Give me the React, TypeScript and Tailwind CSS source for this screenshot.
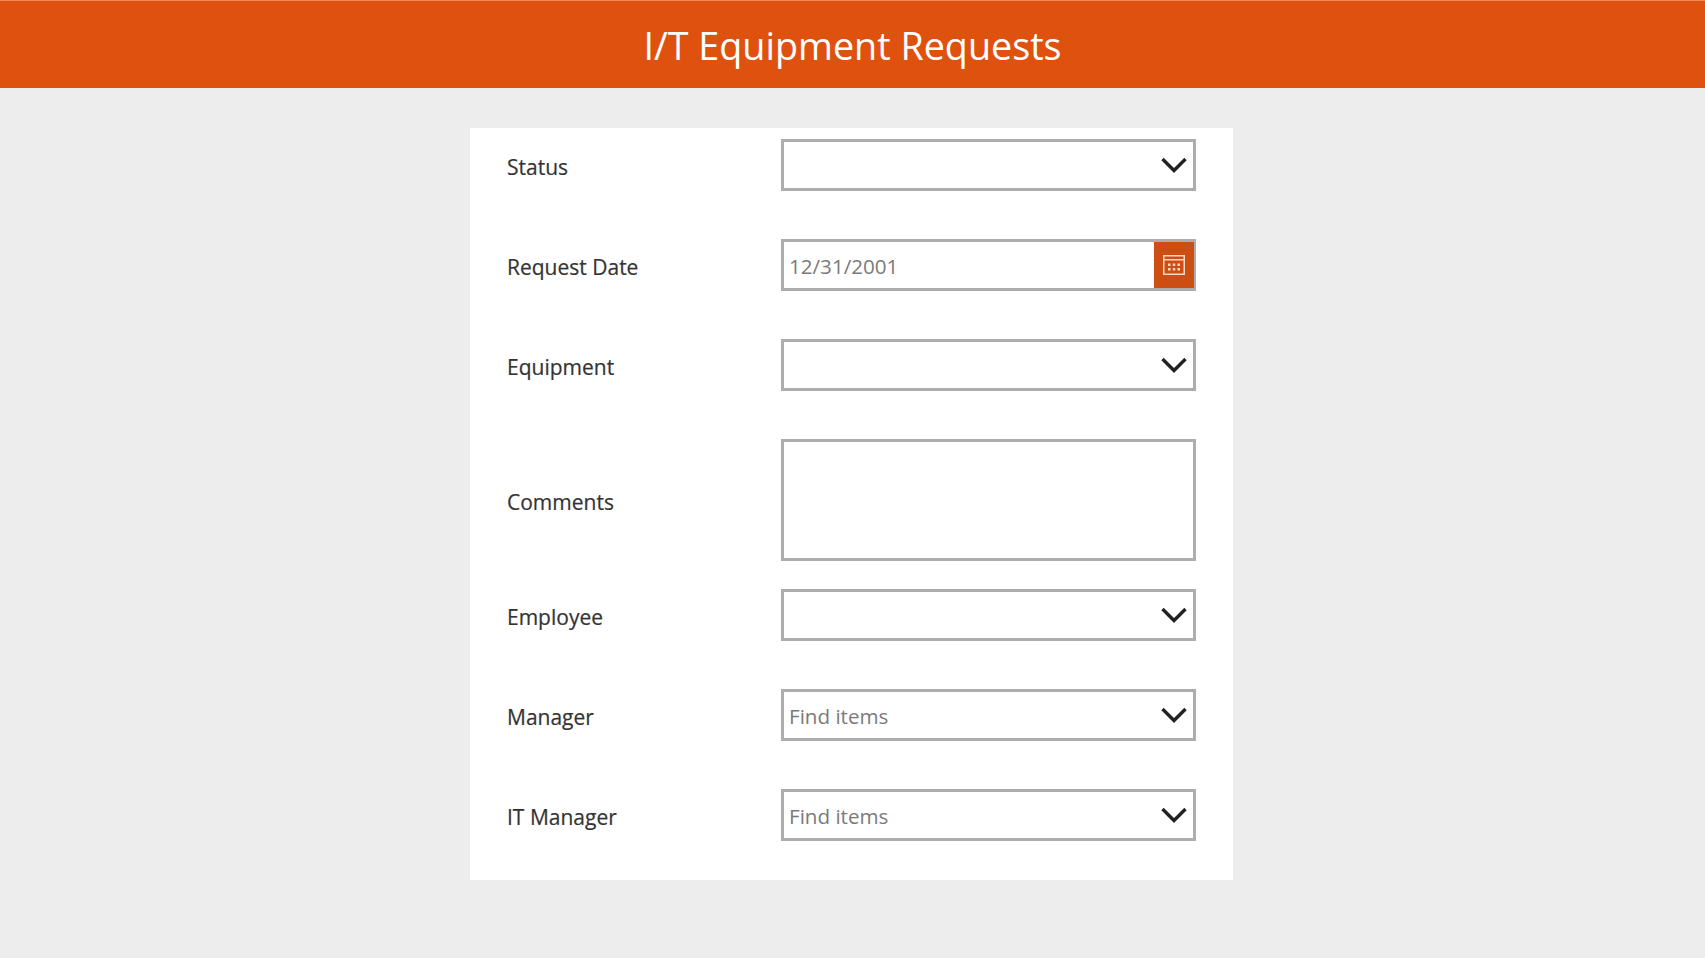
import React from "react";

function Chevron() {
  return (
    <svg width="26" height="16" viewBox="0 0 26 16" fill="none" className="shrink-0">
      <path d="M1.5 2 L13 13.5 L24.5 2" stroke="#222222" strokeWidth="3.4" />
    </svg>
  );
}

function CalendarIcon() {
  return (
    <svg width="22" height="20" viewBox="0 0 22 20" fill="none">
      <rect x="0.75" y="0.75" width="20.5" height="18.5" stroke="#fbd9c0" strokeWidth="1.5" />
      <rect x="1" y="4" width="20" height="1.5" fill="#fbd9c0" />
      <g fill="#fbd9c0">
        <rect x="5" y="8.5" width="2.5" height="2.5" />
        <rect x="9.75" y="8.5" width="2.5" height="2.5" />
        <rect x="14.5" y="8.5" width="2.5" height="2.5" />
        <rect x="5" y="13" width="2.5" height="2.5" />
        <rect x="9.75" y="13" width="2.5" height="2.5" />
        <rect x="14.5" y="13" width="2.5" height="2.5" />
      </g>
    </svg>
  );
}

function Label({ children }: { children: React.ReactNode }) {
  return (
    <div className="w-[311px] pl-[37px] pt-[4px] text-[21px] leading-[30px] text-[#333333] shrink-0 [-webkit-text-stroke:0.2px_#333333]">
      {children}
    </div>
  );
}

function Box({ children, tall }: { children?: React.ReactNode; tall?: boolean }) {
  return (
    <div
      className={
        "w-[415px] border-[3px] border-[#adadad] bg-white flex items-center box-border " +
        (tall ? "h-[122px]" : "h-[52px]")
      }
    >
      {children}
    </div>
  );
}

function SelectRow({ label, placeholder }: { label: string; placeholder?: string }) {
  return (
    <div className="flex items-center">
      <Label>{label}</Label>
      <Box>
        <span className="flex-1 pl-[5px] pt-[3px] text-[20.6px] text-[#7a7a7a]">{placeholder}</span>
        <span className="w-[39px] flex justify-center -mt-[1px]">
          <Chevron />
        </span>
      </Box>
    </div>
  );
}

export default function App() {
  return (
    <div className="w-[1705px] h-[958px] bg-[#ededed] overflow-hidden flex flex-col">
      <header className="h-[88px] shrink-0 bg-[#df510f] border-t border-[#ee8a5a] flex items-center justify-center text-white text-[37.7px] leading-none font-['Open_Sans',sans-serif] pt-[3px]">
        I/T Equipment Requests
      </header>
      <main className="w-[763px] h-[752px] mt-[40px] ml-[470px] bg-white pt-[11px] flex flex-col font-['Open_Sans',sans-serif]">
        <div className="flex flex-col gap-[48px]">
          <SelectRow label="Status" />
          <div className="flex items-center">
            <Label>Request Date</Label>
            <div className="w-[415px] h-[52px] border-[3px] border-[#adadad] bg-white flex items-stretch box-border">
              <span className="flex-1 pl-[5px] pt-[3px] flex items-center text-[20.6px] text-[#7a7a7a]">12/31/2001</span>
              <span className="w-[40px] -mr-[1px] bg-[#cc4e12] flex items-center justify-center">
                <CalendarIcon />
              </span>
            </div>
          </div>
          <SelectRow label="Equipment" />
        </div>
        <div className="flex items-center mt-[48px]">
          <Label>Comments</Label>
          <Box tall />
        </div>
        <div className="flex flex-col gap-[48px] mt-[28px]">
          <SelectRow label="Employee" />
          <SelectRow label="Manager" placeholder="Find items" />
          <SelectRow label="IT Manager" placeholder="Find items" />
        </div>
      </main>
    </div>
  );
}
